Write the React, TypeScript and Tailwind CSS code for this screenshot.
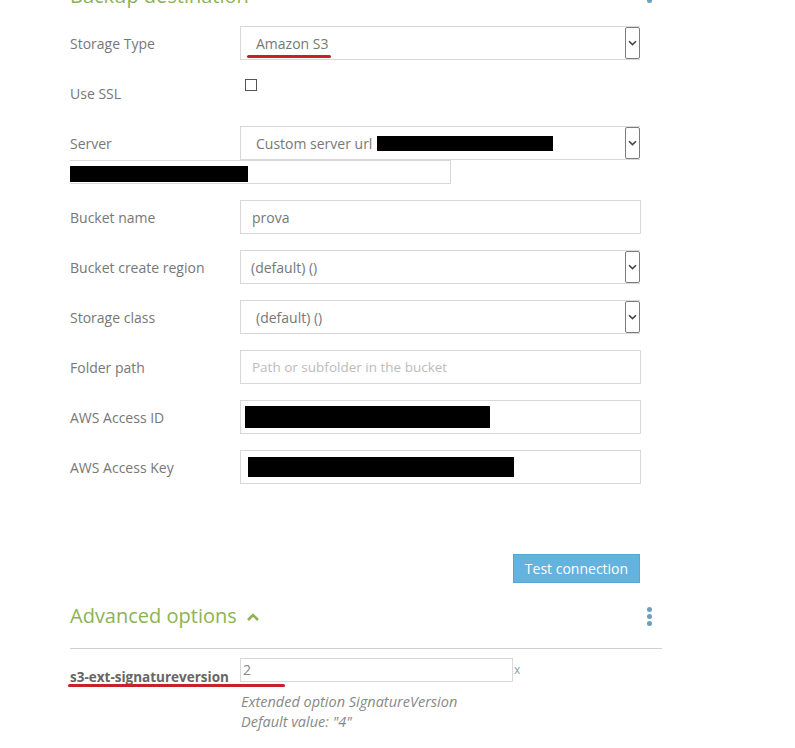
import React from "react";

const font = { fontFamily: '"Open Sans", "Noto Sans", sans-serif' };

function Chevron() {
  return (
    <svg width="9" height="6" viewBox="0 0 9 6" fill="none">
      <path d="M1 1.2 4.5 4.6 8 1.2" stroke="#444" strokeWidth="1.6" />
    </svg>
  );
}

function Kebab() {
  return (
    <div className="flex flex-col gap-[2px] items-center w-[8px]">
      <span className="block w-[5px] h-[5px] rounded-full bg-[#6d9dbf]" />
      <span className="block w-[5px] h-[5px] rounded-full bg-[#6d9dbf]" />
      <span className="block w-[5px] h-[5px] rounded-full bg-[#6d9dbf]" />
    </div>
  );
}

function Row({ label, children }: { label: string; children: React.ReactNode }) {
  return (
    <div className="flex h-[34px] mb-[16px]">
      <div className="w-[170px] shrink-0 flex items-center text-[14px] text-[#777]">{label}</div>
      {children}
    </div>
  );
}

function Select({ children, pl = "pl-[15px]" }: { children: React.ReactNode; pl?: string }) {
  return (
    <div className="w-[400px] h-[34px] flex border border-[#d8d8d8] border-r-0 bg-white">
      <div className={`flex-1 flex items-center text-[14px] text-[#777] ${pl}`}>{children}</div>
      <div className="w-[15px] h-[32px] border border-[#7c7c7c] rounded-[2px] flex items-center justify-center bg-white">
        <Chevron />
      </div>
    </div>
  );
}

function Input({ children, pl = "pl-[11px]" }: { children?: React.ReactNode; pl?: string }) {
  return (
    <div className={`w-[401px] h-[34px] flex items-center border border-[#d8d8d8] bg-white text-[14px] text-[#777] ${pl}`}>
      {children}
    </div>
  );
}

export default function App() {
  return (
    <div className="min-h-[748px] bg-white overflow-hidden" style={font}>
      <div className="pl-[70px] w-[662px]">
        <div className="-mt-[19px] mb-[15px] h-[30px] flex items-center justify-between">
          <span className="text-[20px] leading-[30px] text-[#8db254]">Backup destination</span>
          <div className="mr-[9px] -mt-[6px]">
            <Kebab />
          </div>
        </div>

        <Row label="Storage Type">
          <Select>
            <span className="relative">
              Amazon S3
              <span className="absolute left-[-9px] right-[-3px] bottom-[-4px] h-[3px] rounded-full bg-[#c8202c]" />
            </span>
          </Select>
        </Row>

        <div className="flex h-[34px] mb-[16px]">
          <div className="w-[170px] shrink-0 flex items-center text-[14px] text-[#777] pt-[1px]">Use SSL</div>
          <div className="pt-[3px] pl-[5px]">
            <div className="w-[12px] h-[12px] border border-[#555] bg-white" />
          </div>
        </div>

        <div className="flex h-[34px]">
          <div className="w-[170px] shrink-0 flex items-center text-[14px] text-[#777]">Server</div>
          <Select>
            <span>Custom server url</span>
            <span className="ml-[5px] inline-block w-[176px] h-[15px] bg-black" />
          </Select>
        </div>
        <div className="w-[381px] h-[24px] border border-[#d8d8d8] border-l-0 mb-[16px] pt-[5px]">
          <div className="w-[178px] h-[16px] bg-black" />
        </div>

        <Row label="Bucket name">
          <Input>prova</Input>
        </Row>
        <Row label="Bucket create region">
          <Select pl="pl-[10px]">(default) ()</Select>
        </Row>
        <Row label="Storage class">
          <Select>(default) ()</Select>
        </Row>
        <Row label="Folder path">
          <Input>
            <span className="text-[13.5px] text-[#bbb]">Path or subfolder in the bucket</span>
          </Input>
        </Row>
        <Row label="AWS Access ID">
          <Input pl="pl-[4px]">
            <span className="inline-block w-[245px] h-[22px] bg-black" />
          </Input>
        </Row>
        <Row label="AWS Access Key">
          <Input pl="pl-[7px]">
            <span className="inline-block w-[266px] h-[20px] bg-black" />
          </Input>
        </Row>

        <div className="flex justify-end w-[570px] mt-[70px]">
          <button className="w-[127px] h-[29px] bg-[#64b2de] border border-[#5aa6d2] text-white text-[14px]">
            Test connection
          </button>
        </div>

        <div className="mt-[18px] h-[30px] flex items-center justify-between">
          <div className="flex items-center">
            <span className="text-[20px] leading-[30px] text-[#8db254]">Advanced options</span>
            <svg className="ml-[9px] mt-[1px]" width="14" height="10" viewBox="0 0 14 10" fill="none">
              <path d="M2 8 7 3l5 5" stroke="#8db254" strokeWidth="2.6" />
            </svg>
          </div>
          <div className="mr-[9px]">
            <Kebab />
          </div>
        </div>

        <div className="mt-[17px] border-t border-[#cfcfcf] w-[592px]" />

        <div className="relative flex items-end mt-[9px]">
          <div className="w-[170px] shrink-0 text-[13.5px] font-bold text-[#666] leading-[18px] -mb-[4px]">
            s3-ext-signatureversion
          </div>
          <div className="w-[273px] h-[24px] border border-[#d8d8d8] text-[14px] text-[#888] pl-[2px] leading-[22px]">
            2
          </div>
          <span className="ml-[1px] mb-[5px] text-[12px] leading-[14px] text-[#7b9fbc]">x</span>
          <span className="absolute left-[-2px] top-[26px] w-[217px] h-[3px] rounded-full bg-[#c8202c]" />
        </div>

        <div className="pl-[171px] mt-[10px] text-[14.5px] italic text-[#888] leading-[20px]">
          <div>Extended option SignatureVersion</div>
          <div>Default value: "4"</div>
        </div>
      </div>
    </div>
  );
}
